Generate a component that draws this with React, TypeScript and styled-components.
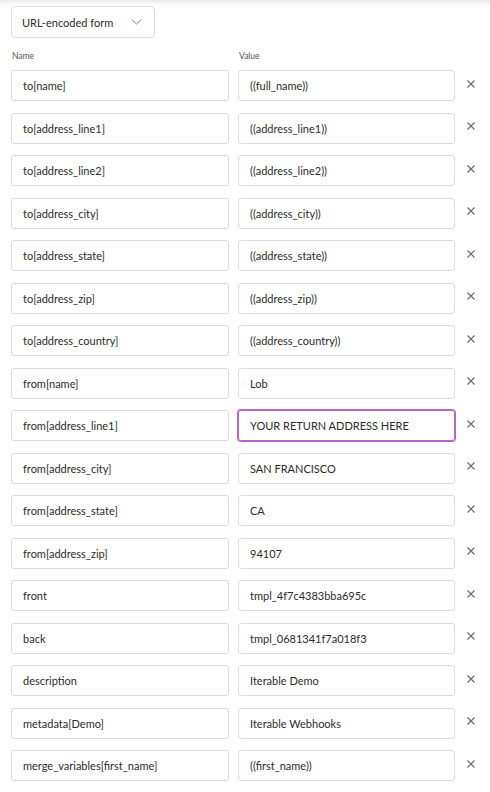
import React from 'react';
import styled, { createGlobalStyle } from 'styled-components';

const GlobalStyle = createGlobalStyle`
  html, body {
    margin: 0;
    padding: 0;
    background: #ffffff;
  }
  body {
    font-family: 'Lato', 'Liberation Sans', sans-serif;
    color: #2b2b2b;
  }
`;

type Field = { name: string; value: string; focused?: boolean };

const fields: Field[] = [
  { name: 'to[name]', value: '((full_name))' },
  { name: 'to[address_line1]', value: '((address_line1))' },
  { name: 'to[address_line2]', value: '((address_line2))' },
  { name: 'to[address_city]', value: '((address_city))' },
  { name: 'to[address_state]', value: '((address_state))' },
  { name: 'to[address_zip]', value: '((address_zip))' },
  { name: 'to[address_country]', value: '((address_country))' },
  { name: 'from[name]', value: 'Lob' },
  { name: 'from[address_line1]', value: 'YOUR RETURN ADDRESS HERE', focused: true },
  { name: 'from[address_city]', value: 'SAN FRANCISCO' },
  { name: 'from[address_state]', value: 'CA' },
  { name: 'from[address_zip]', value: '94107' },
  { name: 'front', value: 'tmpl_4f7c4383bba695c' },
  { name: 'back', value: 'tmpl_0681341f7a018f3' },
  { name: 'description', value: 'Iterable Demo' },
  { name: 'metadata[Demo]', value: 'Iterable Webhooks' },
  { name: 'merge_variables[first_name]', value: '((first_name))' },
];

const App = () => {
  return (
    <>
      <GlobalStyle />
      <Page>
        <TopShade />
        <Content>
          <Select>
            <span>URL-encoded form</span>
            <svg width='11' height='6' viewBox='0 0 11 6' fill='none'>
              <path d='M0.5 0.5L5.5 5L10.5 0.5' stroke='#8a8a8a' strokeWidth='1' />
            </svg>
          </Select>
          <Grid>
            <Label>Name</Label>
            <Label>Value</Label>
            <span />
            {fields.map((f) => (
              <React.Fragment key={f.name}>
                <Input>{f.name}</Input>
                <Input focused={f.focused}>{f.value}</Input>
                <Remove>
                  <svg width='8' height='8' viewBox='0 0 8 8'>
                    <path d='M0.5 0.5L7.5 7.5M7.5 0.5L0.5 7.5' stroke='#6b6b6b' strokeWidth='1.2' />
                  </svg>
                </Remove>
              </React.Fragment>
            ))}
          </Grid>
        </Content>
      </Page>
    </>
  );
};

const Page = styled.div`
  position: relative;
  width: 490px;
  min-height: 792px;
  overflow: hidden;
`;

const TopShade = styled.div`
  position: absolute;
  top: 0;
  left: 0;
  right: 0;
  height: 6px;
  background: linear-gradient(to bottom, rgba(0, 0, 0, 0.08), rgba(0, 0, 0, 0));
`;

const Content = styled.div`
  padding: 6px 0 0 11px;
`;

const Select = styled.div`
  box-sizing: border-box;
  width: 144px;
  height: 32px;
  display: flex;
  align-items: center;
  justify-content: space-between;
  padding: 0 12px 0 10px;
  border: 1px solid #dedede;
  border-radius: 4px;
  font-size: 11px;
  color: #2b2b2b;
`;

const Grid = styled.div`
  display: grid;
  grid-template-columns: 218px 217px 14px;
  column-gap: 9px;
  row-gap: 11.5px;
  margin-top: 13px;
  align-items: center;
`;

const Label = styled.div`
  font-size: 8.5px;
  color: #555555;
  padding-left: 1px;
  margin-bottom: -2.5px;
  line-height: 10px;
`;

const Input = styled.div<{ focused?: boolean }>`
  box-sizing: border-box;
  height: 31px;
  display: flex;
  align-items: center;
  padding: 0 11px;
  border: 1px solid ${({ focused }) => (focused ? '#b565c9' : '#dcdcdc')};
  box-shadow: ${({ focused }) => (focused ? '0 0 0 1px #b565c9' : 'none')};
  border-radius: 3px;
  font-size: 11px;
  color: #2b2b2b;
  white-space: nowrap;
  overflow: hidden;
`;

const Remove = styled.div`
  display: flex;
  align-items: center;
  justify-content: center;
  height: 31px;
  padding-bottom: 4px;
  box-sizing: border-box;
`;

export default App;
